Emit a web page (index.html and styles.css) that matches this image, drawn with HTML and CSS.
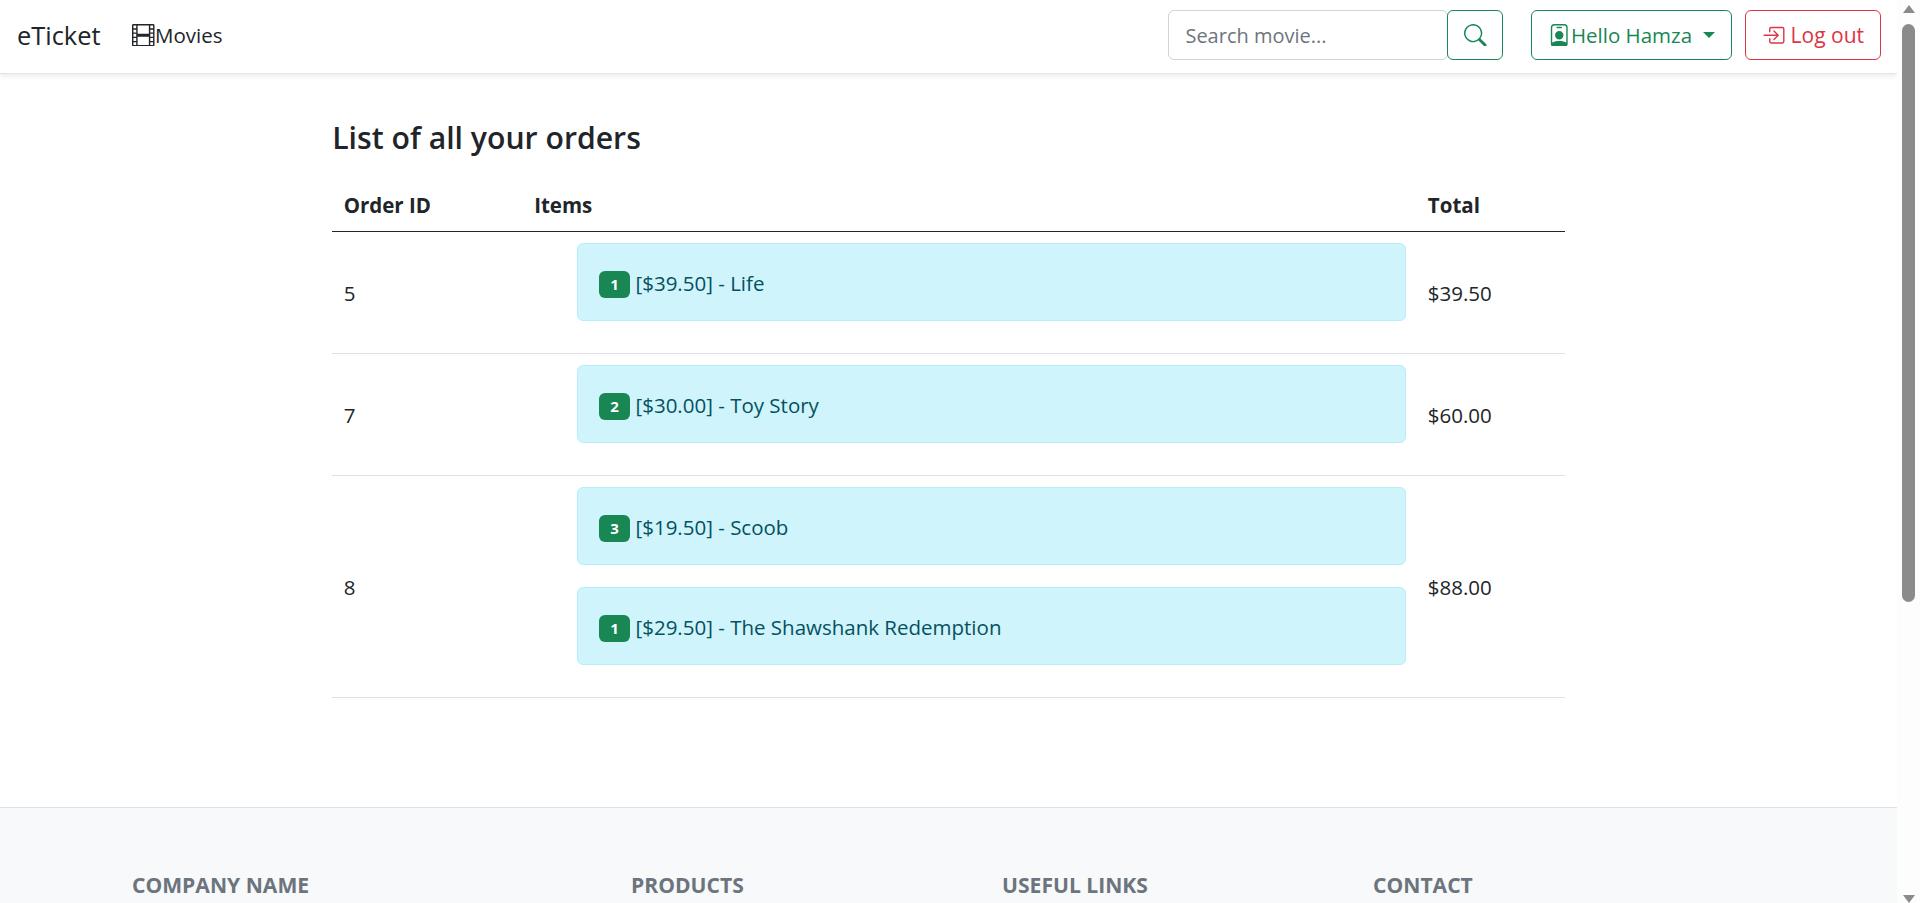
FILE: index.html
```html
<!DOCTYPE html>
<html lang="en">
<head>
<meta charset="utf-8">
<title>eTicket</title>
<link rel="stylesheet" href="styles.css">
</head>
<body>
<nav class="navbar">
  <a class="brand">eTicket</a>
  <a class="nav-link">
    <svg class="icon" viewBox="0 0 16 16" fill="currentColor"><path d="M0 1a1 1 0 0 1 1-1h14a1 1 0 0 1 1 1v14a1 1 0 0 1-1 1H1a1 1 0 0 1-1-1V1zm4 0v6h8V1H4zm8 8H4v6h8V9zM1 1v2h2V1H1zm2 3H1v2h2V4zM1 7v2h2V7H1zm2 3H1v2h2v-2zm-2 3v2h2v-2H1zM15 1h-2v2h2V1zm-2 3v2h2V4h-2zm2 3h-2v2h2V7zm-2 3v2h2v-2h-2zm2 3h-2v2h2v-2z"/></svg><span class="link-text">Movies</span>
  </a>
  <form class="search">
    <input class="search-input" type="text" placeholder="Search movie...">
    <button class="btn btn-success btn-search" type="button" aria-label="Search">
      <svg class="icon" viewBox="0 0 16 16" fill="currentColor"><path d="M11.742 10.344a6.5 6.5 0 1 0-1.397 1.398h-.001c.03.04.062.078.098.115l3.85 3.85a1 1 0 0 0 1.415-1.414l-3.85-3.85a1.007 1.007 0 0 0-.115-.1zM12 6.5a5.5 5.5 0 1 1-11 0 5.5 5.5 0 0 1 11 0z"/></svg>
    </button>
  </form>
  <button class="btn btn-success btn-user" type="button">
    <svg class="icon" viewBox="0 0 16 16" fill="currentColor"><path d="M6.500 2a.5.5 0 0 0 0 1h3a.5.5 0 0 0 0-1h-3zM11 8a3 3 0 1 1-6 0 3 3 0 0 1 6 0z"/><path d="M4.500 0A2.500 2.500 0 0 0 2 2.500V14a2 2 0 0 0 2 2h8a2 2 0 0 0 2-2V2.500A2.500 2.500 0 0 0 11.500 0h-7zM3 2.500A1.500 1.500 0 0 1 4.500 1h7A1.500 1.500 0 0 1 13 2.500v10.795a4.200 4.200 0 0 0-.776-.492C11.392 12.387 10.063 12 8 12s-3.392.387-4.224.803a4.200 4.200 0 0 0-.776.492V2.500z"/></svg><span class="btn-text">Hello Hamza</span><span class="caret"></span>
  </button>
  <button class="btn btn-danger btn-logout" type="button">
    <svg class="icon" viewBox="0 0 16 16" fill="currentColor"><path d="M6 3.500a.5.5 0 0 1 .5-.5h8a.5.5 0 0 1 .5.5v9a.5.5 0 0 1-.5.5h-8a.5.5 0 0 1-.5-.5v-2a.5.5 0 0 0-1 0v2A1.500 1.500 0 0 0 6.500 14h8a1.500 1.500 0 0 0 1.500-1.500v-9A1.500 1.500 0 0 0 14.500 2h-8A1.500 1.500 0 0 0 5 3.500v2a.5.5 0 0 0 1 0v-2z"/><path d="M11.854 8.354a.5.5 0 0 0 0-.708l-3-3a.5.5 0 1 0-.708.708L10.293 7.500H1.500a.5.5 0 0 0 0 1h8.793l-2.147 2.146a.5.5 0 0 0 .708.708l3-3z"/></svg><span class="btn-text">Log out</span>
  </button>
</nav>

<main class="content">
  <div class="orders">
    <h4 class="title">List of all your orders</h4>
    <table class="table">
      <thead>
        <tr><th class="col-id">Order ID</th><th class="col-items">Items</th><th class="col-total">Total</th></tr>
      </thead>
      <tbody>
        <tr>
          <td>5</td>
          <td><ul class="items">
            <li class="alert"><span class="badge">1</span> [$39.50] - Life</li>
          </ul></td>
          <td>$39.50</td>
        </tr>
        <tr>
          <td>7</td>
          <td><ul class="items">
            <li class="alert"><span class="badge">2</span> [$30.00] - Toy Story</li>
          </ul></td>
          <td>$60.00</td>
        </tr>
        <tr>
          <td>8</td>
          <td><ul class="items">
            <li class="alert"><span class="badge">3</span> [$19.50] - Scoob</li>
            <li class="alert"><span class="badge">1</span> [$29.50] - The Shawshank Redemption</li>
          </ul></td>
          <td>$88.00</td>
        </tr>
      </tbody>
    </table>
  </div>
</main>

<footer class="footer">
  <div class="footer-grid">
    <h6 class="footer-title">Company name</h6>
    <h6 class="footer-title">Products</h6>
    <h6 class="footer-title">Useful links</h6>
    <h6 class="footer-title">Contact</h6>
  </div>
</footer>

<aside class="scrollbar" aria-hidden="true">
  <span class="arrow-up"></span>
  <span class="thumb"></span>
  <span class="arrow-down"></span>
</aside>
</body>
</html>
```

FILE: styles.css
```css
* { box-sizing: border-box; }

body {
  margin: 0;
  padding-right: 23px;
  min-height: 1339px;
  display: flex;
  flex-direction: column;
  font-family: "Open Sans", "Noto Sans", sans-serif;
  font-size: 20.5px;
  line-height: 30px;
  color: #212529;
  background: #fff;
}

.icon { width: 22.5px; height: 22.5px; flex: none; display: block; }

/* Fake window scrollbar, drawn over the page edge */
.scrollbar {
  position: fixed;
  top: 0;
  right: 0;
  bottom: 0;
  width: 23px;
  display: flex;
  flex-direction: column;
  align-items: center;
  padding-top: 5px;
  background: #fdfdfd;
}
.arrow-up {
  border-bottom: 8px solid #8b8b8b;
  border-left: 6.5px solid transparent;
  border-right: 6.5px solid transparent;
}
.thumb {
  width: 13px;
  height: 578px;
  margin-top: 11px;
  background: #8b8b8b;
  border-radius: 6.5px;
}
.arrow-down {
  margin-top: auto;
  border-top: 8px solid #8b8b8b;
  border-left: 6.5px solid transparent;
  border-right: 6.5px solid transparent;
}

/* Navbar */
.navbar {
  display: flex;
  align-items: center;
  height: 74px;
  padding: 0 16px 3px 17px;
  background: #fff;
  border-bottom: 1px solid #e3e3e3;
  box-shadow: 0 2.5px 5px rgba(0, 0, 0, .075);
}
.brand { font-size: 25.4px; color: #212529; }
.nav-link {
  display: flex;
  align-items: center;
  margin-left: 32px;
  color: #212529;
}
.search { display: flex; margin-left: auto; margin-right: 28px; }
.search-input {
  width: 280px;
  height: 50px;
  padding: 0 16px;
  font: inherit;
  font-size: 20px;
  color: #212529;
  background: #fff;
  border: 1px solid #ced4da;
  border-radius: 6px;
}
.search-input::placeholder { color: #6c757d; opacity: 1; }

.btn {
  display: flex;
  align-items: center;
  height: 50px;
  padding: 0 15px;
  font: inherit;
  background: #fff;
  border: 1px solid;
  border-radius: 6px;
}
.btn-success { color: #198754; border-color: #198754; }
.btn-danger { color: #dc3545; border-color: #dc3545; }
.btn-search { width: 56px; justify-content: center; margin-left: -1px; padding: 0; }
.btn-user { margin-right: 13px; padding: 0 16px; }
.btn-logout { padding: 0 16px 0 16px; }
.btn-logout .btn-text { margin-left: 6px; font-size: 21px; }
.caret {
  margin-left: 11px;
  border-top: 6px solid currentColor;
  border-left: 6px solid transparent;
  border-right: 6px solid transparent;
}

/* Orders */
.content { flex: none; padding-top: 46px; }
.orders { width: 66.6667%; margin-left: 16.6667%; padding: 0 16px; }
.title { margin: 0 0 24px; font-size: 30.2px; line-height: 36px; font-weight: 600; }
.table { width: 100%; border-collapse: collapse; table-layout: fixed; margin-bottom: 109px; }
.table th { padding: 10px 10px 11px 11.5px; text-align: left; font-weight: 700; border-bottom: 1px solid #212529; }
.table td { padding: 10.5px 10.5px 10.5px 11.5px; vertical-align: middle; border-bottom: 1px solid #dee2e6; }
.col-id { width: 190.5px; }
.col-total { width: 148.5px; }
.items { list-style: none; margin: 0; padding: 0 0 0 43px; }
.alert {
  height: 78.5px;
  margin-bottom: 21.5px;
  padding: 3px 21px 0;
  display: flex;
  align-items: center;
  color: #055160;
  background: #cff4fc;
  border: 1px solid #b6effb;
  border-radius: 6px;
  white-space: pre;
}
.badge {
  display: block;
  width: 31px;
  height: 27.5px;
  margin-top: 2px;
  text-align: center;
  font-size: 15px;
  line-height: 27.5px;
  font-weight: 700;
  color: #fff;
  background: #198754;
  border-radius: 6px;
}

/* Footer */
.footer {
  flex: 1;
  padding: 62px 0 0 132px;
  background: #f8f9fa;
  border-top: 1px solid #dee2e6;
}
.footer-grid { display: grid; grid-template-columns: 499px 371px 371px auto; }
.footer-title {
  margin: 0;
  font-size: 21.1px;
  line-height: 30px;
  font-weight: 700;
  text-transform: uppercase;
  color: #6c757d;
}
```
